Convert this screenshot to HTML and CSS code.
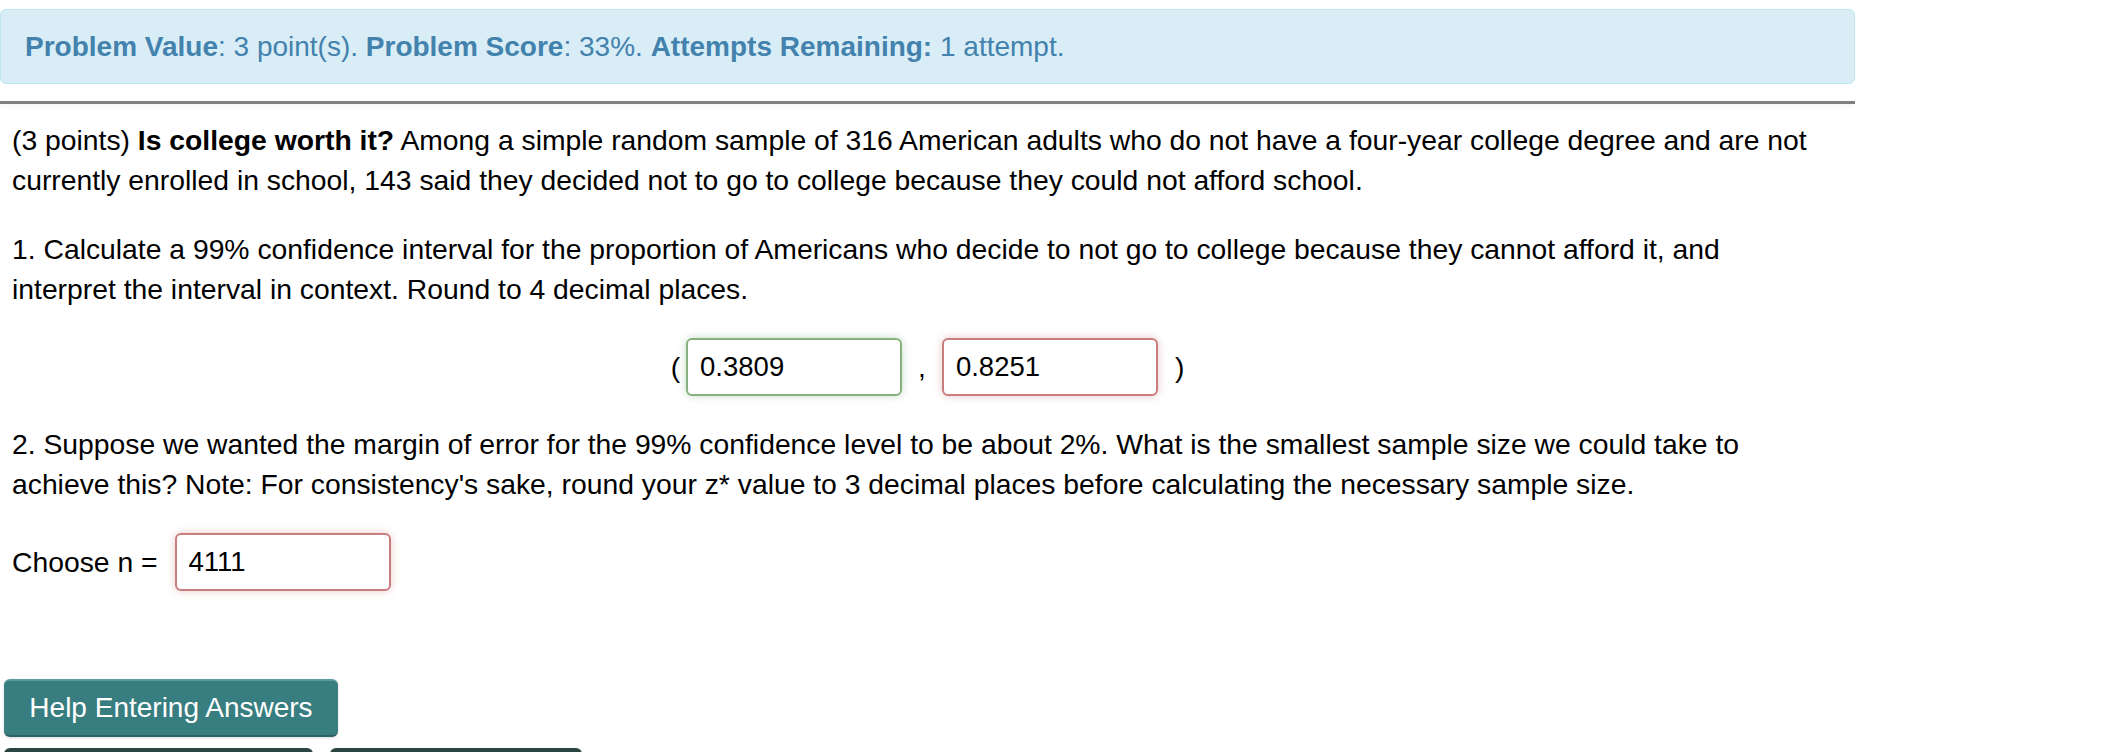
FILE: index.html
```html
<!DOCTYPE html>
<html lang="en">
<head>
  <meta charset="UTF-8">
  <title>Problem</title>
  <link rel="stylesheet" href="styles.css">
</head>
<body>
  <div class="page">
    <div class="alert">
      <span><b>Problem Value</b>: 3 point(s). <b>Problem Score</b>: 33%. <b>Attempts Remaining:</b> 1 attempt.</span>
    </div>
    <div class="rule"></div>

    <div class="problem">
      <p>(3 points) <b>Is college worth it?</b> Among a simple random sample of 316 American adults who do not have a four-year college degree and are not currently enrolled in school, 143 said they decided not to go to college because they could not afford school.</p>

      <p>1. Calculate a 99% confidence interval for the proportion of Americans who decide to not go to college because they cannot afford it, and interpret the interval in context. Round to 4 decimal places.</p>

      <div class="interval">
        <span class="paren">(</span>
        <input class="answer correct" type="text" value="0.3809">
        <span class="comma">,</span>
        <input class="answer wrong" type="text" value="0.8251">
        <span class="paren close">)</span>
      </div>

      <p>2. Suppose we wanted the margin of error for the 99% confidence level to be about 2%. What is the smallest sample size we could take to achieve this? Note: For consistency's sake, round your z* value to 3 decimal places before calculating the necessary sample size.</p>

      <div class="choose">
        <span>Choose n =</span>
        <input class="answer wrong" type="text" value="4111">
      </div>
    </div>

    <button class="help">Help Entering Answers</button>
    <div class="actions">
      <button class="dark first">Preview My Answers</button>
      <button class="dark second">Submit Answers</button>
    </div>
  </div>
</body>
</html>
```

FILE: styles.css
```css
body {
  margin: 0;
  font-family: 'Liberation Sans', Arial, sans-serif;
  font-size: 28.3px;
  color: #000;
  background: #fff;
  overflow: hidden;
}

.page {
  width: 1855px;
  height: 752px;
  overflow: hidden;
}

.alert {
  margin-top: 9px;
  height: 73px;
  display: flex;
  align-items: center;
  padding: 0 24px;
  background-color: #d9edf7;
  border: 1px solid #bce8f1;
  border-radius: 6px;
  color: #4282ad;
  font-size: 28px;
}

.rule {
  margin-top: 17px;
  height: 3px;
  background-color: #7f7f7f;
  box-shadow: 0 2px 4px rgba(0, 0, 0, 0.06);
}

.problem {
  padding: 16px 12px 0;
  line-height: 40px;
}

.problem p {
  margin: 0 0 29px;
  padding-right: 24px;
}

.interval {
  display: flex;
  justify-content: center;
  align-items: center;
  margin-bottom: 28px;
}

.answer {
  width: 216px;
  height: 58px;
  box-sizing: border-box;
  padding: 0 12px;
  border-radius: 6px;
  border: 2px solid #ccc;
  font-family: 'Liberation Sans', Arial, sans-serif;
  font-size: 27.5px;
  color: #000;
  background: #fff;
}

.answer.correct {
  border-color: #86b17d;
  box-shadow: 0 0 8px rgba(70, 136, 71, 0.3);
}

.answer.wrong {
  border-color: #c97e7e;
  box-shadow: 0 0 8px rgba(185, 74, 72, 0.3);
}

.paren {
  margin-right: 6px;
}

.paren.close {
  margin: 0 0 0 17px;
}

.comma {
  margin: 0 16px;
}

.choose {
  display: flex;
  align-items: center;
  gap: 17px;
  height: 58px;
}

button {
  font-family: 'Liberation Sans', Arial, sans-serif;
  font-size: 28px;
  color: #fff;
  border: none;
  cursor: pointer;
}

.help {
  display: block;
  margin: 88px 0 0 4px;
  width: 334px;
  height: 58px;
  padding: 0;
  border-radius: 6px;
  background-color: #387d7f;
  border-top: 2px solid #5d9a9b;
  border-bottom: 2px solid #2b6264;
  box-shadow: 0 1px 3px rgba(0, 0, 0, 0.15);
}

.actions {
  display: flex;
  gap: 17px;
  margin: 11px 0 0 4px;
}

.dark {
  height: 58px;
  border-radius: 6px;
  background-color: #2a4642;
}

.dark.first {
  width: 309px;
}

.dark.second {
  width: 252px;
}
```
